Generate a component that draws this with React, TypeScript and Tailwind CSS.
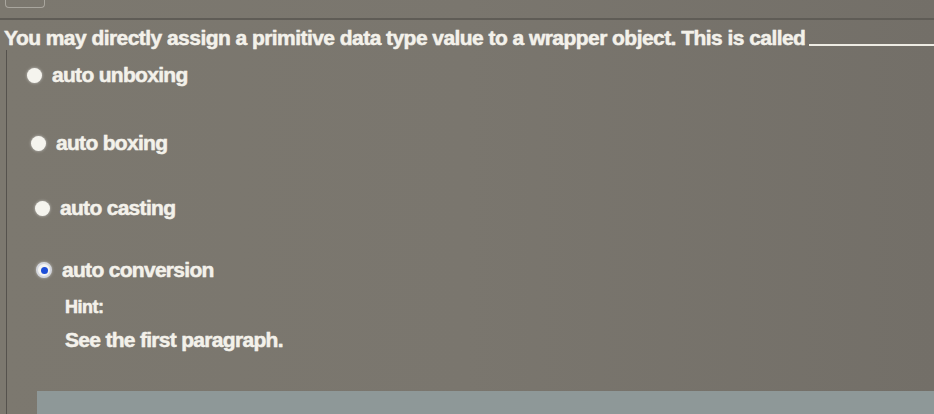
const options = [
  { label: "auto unboxing", pad: "pl-[20px]", gap: "mt-[13px]", checked: false },
  { label: "auto boxing", pad: "pl-[24px]", gap: "mt-[44px]", checked: false },
  { label: "auto casting", pad: "pl-[28px]", gap: "mt-[41px]", checked: false },
  { label: "auto conversion", pad: "pl-[29px]", gap: "mt-[38px]", checked: true },
];

function Radio({ checked }: { checked: boolean }) {
  if (checked) {
    return (
      <span className="flex size-[16px] shrink-0 items-center justify-center rounded-full border-[2px] border-[#d4d7de] bg-[#f4f4f2] shadow-[0_0_3px_rgba(255,255,255,0.5)]">
        <span className="size-[7px] rounded-full bg-[#1d4ed8]" />
      </span>
    );
  }
  return (
    <span className="size-[15px] shrink-0 rounded-full bg-[#f5f4ee] shadow-[0_0_3px_rgba(255,255,255,0.6)]" />
  );
}

export default function App() {
  return (
    <div className="flex h-[414px] w-[934px] flex-col overflow-hidden bg-gradient-to-r from-[#7c786f] via-[#7a766e] to-[#736f68] font-['Liberation_Sans',Arial,sans-serif] font-bold text-[#f3f1ea] [-webkit-text-stroke:0.4px_#f3f1ea] [text-shadow:0_0_1px_rgba(255,255,255,0.4)]">
      <div className="h-[20px] shrink-0 border-b-[2px] border-[#5f5c56] pl-[5px]">
        <div className="h-[8px] w-[40px] rounded-b-[4px] border-x border-b border-[#a9a69e]" />
      </div>

      <div className="flex flex-1 flex-col">
        <div className="mt-[6px] flex items-end">
          <p className="pl-[4px] text-[21px] leading-[24px] tracking-[-0.55px] whitespace-nowrap">
            You may directly assign a primitive data type value to a wrapper object. This is called
          </p>
          <span className="mb-[4px] ml-[4px] h-[2px] flex-1 bg-[#eeece4]" />
        </div>

        <div className="ml-[6px] flex flex-1 flex-col border-l border-[#55524d]">
          {options.map((o) => (
            <div key={o.label} className={`flex items-center gap-[10px] ${o.pad} ${o.gap}`}>
              <Radio checked={o.checked} />
              <span className="text-[21px] leading-[24px] tracking-[-0.7px]">{o.label}</span>
            </div>
          ))}

          <p className="mt-[15px] pl-[58px] text-[18px] leading-[20px] tracking-[-0.5px]">Hint:</p>
          <p className="mt-[11px] pl-[58px] text-[21px] leading-[24px] tracking-[-0.7px]">
            See the first paragraph.
          </p>

          <div className="mt-[39px] ml-[30px] flex-1 bg-[#8e9898]" />
        </div>
      </div>
    </div>
  );
}
